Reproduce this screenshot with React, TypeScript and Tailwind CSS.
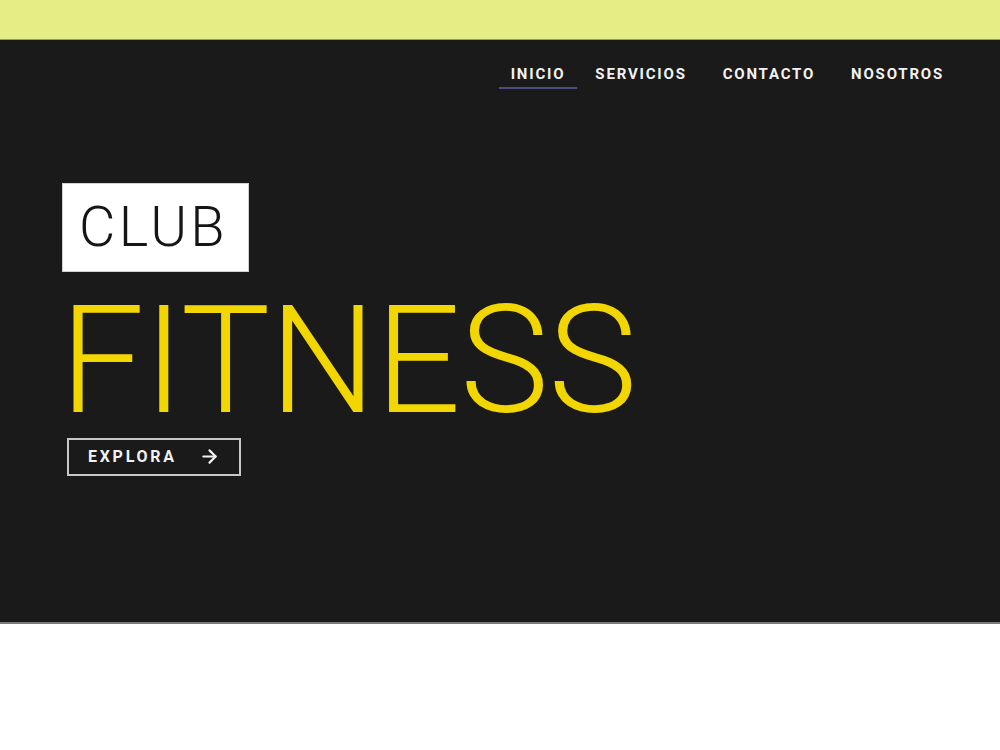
import { ArrowRight } from "lucide-react";

const links = ["INICIO", "SERVICIOS", "CONTACTO", "NOSOTROS"];

export default function App() {
  return (
    <div className="w-[1000px] h-[750px] bg-white font-['Roboto',sans-serif]">
      <div className="h-[40px] bg-[#e4ee84] border-b border-[#9aa246]" />
      <section className="h-[584px] bg-[#1a1a1a] border-b-2 border-[#7a7a7a] flex flex-col">
        {/* Nav */}
        <nav className="flex justify-end pr-[38px] pt-[19px]">
          <ul className="flex items-center">
            {links.map((l, i) => (
              <li key={l}>
                <a
                  href="#"
                  className={`block text-[15px] font-bold tracking-[0.12em] text-[#f2f2f2] pt-[4px] pb-[1px] ${
                    i === 0 ? "px-[12px] border-b-2 border-[#4c4c7e]" : "px-[18px] border-b-2 border-transparent"
                  }`}
                >
                  {l}
                </a>
              </li>
            ))}
          </ul>
        </nav>

        {/* Hero */}
        <div className="pl-[62px] pt-[94px] flex flex-col items-start">
          <div className="bg-white w-[187px] h-[89px] flex items-center pl-[16px] border border-[#d0d0d0]">
            <span className="text-[56px] font-light tracking-[0.06em] text-[#151515] leading-none">CLUB</span>
          </div>
          <h1 className="text-[150px] font-light text-[#f1d600] leading-[110px] mt-[34px] -ml-[2px] tracking-[-0.005em]">
            FITNESS
          </h1>
          <a
            href="#"
            className="mt-[22px] ml-[5px] w-[174px] h-[38px] border-2 border-[#c8c8c8] flex items-center pl-[19px] gap-[22px] text-[#f2f2f2]"
          >
            <span className="text-[16px] font-bold tracking-[0.17em]">EXPLORA</span>
            <ArrowRight className="w-[21px] h-[21px]" strokeWidth={2.5} />
          </a>
        </div>
      </section>
    </div>
  );
}
